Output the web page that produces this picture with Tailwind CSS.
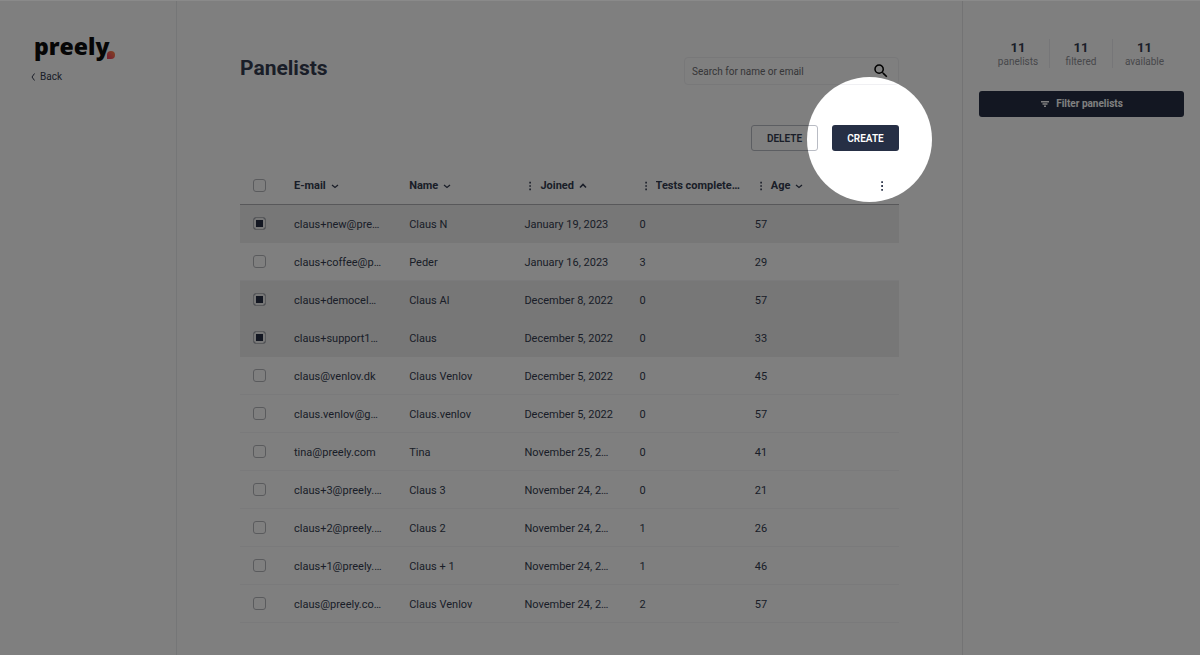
<!DOCTYPE html>
<html lang="en">

<head>
  <meta charset="UTF-8">
  <meta name="viewport" content="width=device-width, initial-scale=1">
  <title>Preely - Panelists</title>
  <script src="https://cdn.jsdelivr.net/npm/@tailwindcss/browser@4"></script>
</head>

<body class="bg-white text-[#343c50] font-[Roboto,sans-serif] text-[11px] leading-4">
  <div class="flex min-h-screen overflow-hidden border-t border-[#8a8a8a]">

    <!-- Left sidebar -->
    <aside class="w-[177px] shrink-0 border-r border-[#eaecee] pt-[30px] pl-[30px]">
      <div class="flex items-end pl-1 text-[#0c0c0c]">
        <span class="font-['Open_Sans',sans-serif] text-[23px] leading-[30px] font-extrabold">preely</span>
        <svg class="mb-0.5 -ml-0.5 h-2 w-2" viewBox="0 0 8 8" aria-hidden="true">
          <defs>
            <linearGradient id="drop" x1="0" y1="1" x2="1" y2="0">
              <stop offset="0.2" stop-color="#f0465e"></stop>
              <stop offset="0.8" stop-color="#ff7a4a"></stop>
            </linearGradient>
          </defs>
          <path d="M0 8V4a4 4 0 1 1 4 4z" fill="url(#drop)"></path>
        </svg>
      </div>
      <a href="#" class="mt-2 flex items-center gap-1 text-[10px]">
        <svg class="h-2 w-[6px]" viewBox="0 0 6 8" fill="none" stroke="currentColor" aria-hidden="true">
          <path d="M4.500 .5L2 4l2.500 3.500"></path>
        </svg>
        Back
      </a>
    </aside>

    <!-- Main content -->
    <main class="min-w-0 flex-1 px-[63px] pt-14">
      <div class="flex items-center justify-between">
        <h1 class="-mt-1.5 text-[21px] font-bold">Panelists</h1>
        <label class="flex h-7 w-[215px] items-center rounded-sm border border-[#f0f0f3] pr-2 pl-[7px]">
          <input type="search" aria-label="Search for name or email" placeholder="Search for name or email" class="min-w-0 flex-1 pt-0.5 text-[10px] outline-none placeholder:text-[#6c6c70]">
          <svg class="h-[18px] w-[18px] text-black" viewBox="0 0 24 24" fill="currentColor" aria-hidden="true">
            <path d="M15.500 14h-.79l-.28-.27A6.470 6.470 0 0 0 16 9.500 6.500 6.500 0 1 0 9.500 16c1.610 0 3.090-.59 4.230-1.570l.27.28v.79l5 4.990L20.490 19l-4.990-5zm-6 0C7.010 14 5 11.990 5 9.500S7.010 5 9.500 5 14 7.010 14 9.500 11.990 14 9.500 14z"></path>
          </svg>
        </label>
      </div>

      <div class="mt-10 flex justify-end gap-3.5">
        <button type="button" class="h-[26px] w-[67px] rounded-[3px] border border-[#b9bcc4] pt-px text-[10px] font-semibold">DELETE</button>
        <div class="relative">
          <button type="button" class="h-[26px] w-[67px] rounded-[3px] bg-[#262f45] pt-px text-[10px] font-semibold text-white">CREATE</button>
          <!-- Onboarding spotlight, dims everything around the button -->
          <div class="pointer-events-none absolute -top-12 -left-[25px] z-10 h-[125px] w-[125px] rounded-full shadow-[0_0_0_1600px_rgba(0,0,0,0.5)]"></div>
        </div>
      </div>

      <table class="mt-3.5 w-full table-fixed text-left">
        <colgroup>
          <col class="w-[41px]">
          <col>
          <col>
          <col>
          <col>
          <col>
          <col class="w-[42px]">
        </colgroup>
        <thead>
          <tr class="h-[39px] border-b border-[#b0b0b4] whitespace-nowrap">
            <th class="pt-0.5 pl-[13px]">
              <input type="checkbox" aria-label="Select all" class="block h-[13px] w-[13px] appearance-none rounded-[3px] border border-[#b4b6bb]">
            </th>
            <th class="pt-[3px] pl-[13px]">
              <div class="flex items-center gap-1">E-mail
                <svg class="ml-px h-2 w-2" viewBox="0 0 8 8" fill="none" stroke="currentColor" stroke-width="1.300"><path d="M1 3l3 2.500L7 3"></path></svg>
              </div>
            </th>
            <th class="pt-[3px] pl-[13px]">
              <div class="flex items-center gap-1">Name
                <svg class="ml-px h-2 w-2" viewBox="0 0 8 8" fill="none" stroke="currentColor" stroke-width="1.300"><path d="M1 3l3 2.500L7 3"></path></svg>
              </div>
            </th>
            <th class="pt-[3px] pl-[13px]">
              <div class="flex items-center gap-1">
                <svg class="h-3 w-3" viewBox="0 0 12 12" fill="currentColor"><path d="M5.300 1.800h1.600v1.600H5.300zM5.300 5.200h1.600v1.600H5.300zM5.300 8.600h1.600v1.600H5.300z"></path></svg>
                Joined
                <svg class="ml-px h-2 w-2" viewBox="0 0 8 8" fill="none" stroke="currentColor" stroke-width="1.600"><path d="M1 5.500L4 2.500l3 3"></path></svg>
              </div>
            </th>
            <th class="pt-[3px] pl-[13px]">
              <div class="flex items-center gap-1">
                <svg class="h-3 w-3 shrink-0" viewBox="0 0 12 12" fill="currentColor"><path d="M5.300 1.800h1.600v1.600H5.300zM5.300 5.200h1.600v1.600H5.300zM5.300 8.600h1.600v1.600H5.300z"></path></svg>
                <span class="truncate">Tests completed (total)</span>
              </div>
            </th>
            <th class="pt-[3px] pl-[13px]">
              <div class="flex items-center gap-1">
                <svg class="h-3 w-3" viewBox="0 0 12 12" fill="currentColor"><path d="M5.300 1.800h1.600v1.600H5.300zM5.300 5.200h1.600v1.600H5.300zM5.300 8.600h1.600v1.600H5.300z"></path></svg>
                Age
                <svg class="ml-px h-2 w-2" viewBox="0 0 8 8" fill="none" stroke="currentColor" stroke-width="1.300"><path d="M1 3l3 2.500L7 3"></path></svg>
              </div>
            </th>
            <th class="pt-[3px] pr-[11px]">
              <button type="button" aria-label="Columns" class="ml-auto block">
                <svg class="h-3 w-3" viewBox="0 0 12 12" fill="currentColor"><path d="M5.200 1.200h1.800v1.800H5.200zM5.200 5.100h1.800v1.800H5.200zM5.200 9h1.800v1.800H5.200z"></path></svg>
              </button>
            </th>
          </tr>
        </thead>
        <tbody id="panelists"></tbody>
      </table>
    </main>

    <!-- Right sidebar -->
    <aside class="w-[238px] shrink-0 border-l border-[#e6e6e8] px-4 pt-[38px]">
      <dl class="mx-2 grid grid-cols-3 divide-x divide-[#ececf0] text-center">
        <div class="flex flex-col-reverse pt-px">
          <dt class="text-[10px] leading-3 text-[#8f9096]">panelists</dt>
          <dd class="text-[13px] font-bold">11</dd>
        </div>
        <div class="flex flex-col-reverse pt-px">
          <dt class="text-[10px] leading-3 text-[#8f9096]">filtered</dt>
          <dd class="text-[13px] font-bold">11</dd>
        </div>
        <div class="flex flex-col-reverse pt-px">
          <dt class="text-[10px] leading-3 text-[#8f9096]">available</dt>
          <dd class="text-[13px] font-bold">11</dd>
        </div>
      </dl>
      <button type="button" class="mt-[23px] flex h-[26px] w-full items-center justify-center gap-1.5 rounded-[3px] bg-[#262f45] text-[10px] font-bold text-white">
        <svg class="h-2.5 w-2.5" viewBox="0 0 10 10" fill="none" stroke="currentColor" stroke-width="1.500"><path d="M1 2.800h8M2.500 5h5M4 7.200h2"></path></svg>
        Filter panelists
      </button>
    </aside>
  </div>

  <script>
    const panelists = [
      ['claus+new@preely.com', 'Claus N', 'January 19, 2023', 0, 57, true],
      ['claus+coffee@preely.com', 'Peder', 'January 16, 2023', 3, 29, false],
      ['claus+democelm@preely.com', 'Claus Al', 'December 8, 2022', 0, 57, true],
      ['claus+support1@preely.com', 'Claus', 'December 5, 2022', 0, 33, true],
      ['claus@venlov.dk', 'Claus Venlov', 'December 5, 2022', 0, 45, false],
      ['claus.venlov@gmail.com', 'Claus.venlov', 'December 5, 2022', 0, 57, false],
      ['tina@preely.com', 'Tina', 'November 25, 2022', 0, 41, false],
      ['claus+3@preely.com', 'Claus 3', 'November 24, 2022', 0, 21, false],
      ['claus+2@preely.com', 'Claus 2', 'November 24, 2022', 1, 26, false],
      ['claus+1@preely.com', 'Claus + 1', 'November 24, 2022', 1, 46, false],
      ['claus@preely.com', 'Claus Venlov', 'November 24, 2022', 2, 57, false],
    ];

    document.getElementById('panelists').innerHTML = panelists.map(([email, name, joined, tests, age, selected]) => `
      <tr class="h-[38px] border-b border-[#f4f4f6] has-checked:border-[#eeeeee] has-checked:bg-[#eeeeee]">
        <td class="pl-[13px]">
          <input type="checkbox" aria-label="Select ${email}" ${selected ? 'checked' : ''} class="block h-[13px] w-[13px] appearance-none rounded-[3px] border border-[#b4b6bb] checked:bg-[#262f45] checked:shadow-[inset_0_0_0_2px_#eeeeee]">
        </td>
        <td class="truncate px-[13px] pt-[3px]">${email}</td>
        <td class="truncate px-[13px] pt-[3px]">${name}</td>
        <td class="truncate px-[13px] pt-[3px]">${joined}</td>
        <td class="truncate px-[13px] pt-[3px]">${tests}</td>
        <td class="truncate px-[13px] pt-[3px]">${age}</td>
        <td></td>
      </tr>`).join('');
  </script>
</body>

</html>
